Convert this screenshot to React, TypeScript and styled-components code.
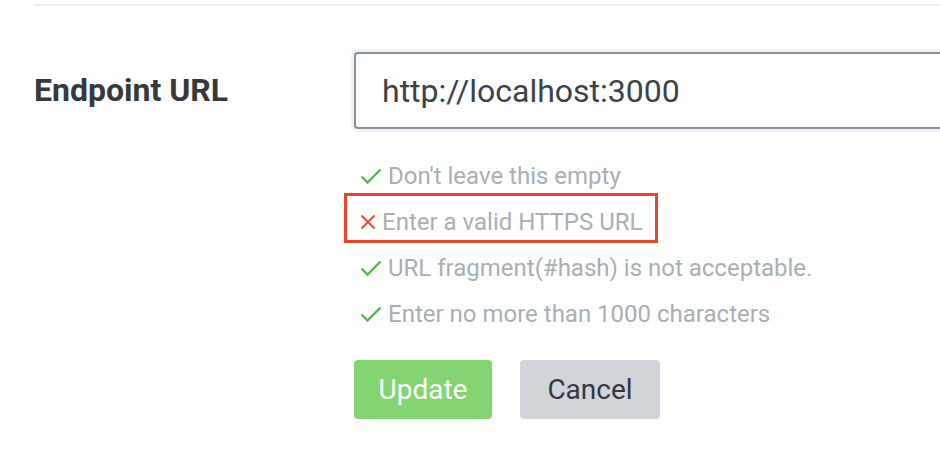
import React from "react";
import styled, { createGlobalStyle } from "styled-components";

const GlobalStyle = createGlobalStyle`
  body {
    margin: 0;
    background: #ffffff;
    font-family: Roboto, "Liberation Sans", Arial, sans-serif;
    overflow: hidden;
  }
`;

const Page = styled("div")`
  padding: 4px 0 0 34px;
  width: 100%;
  height: 462px;
  box-sizing: border-box;
  overflow: hidden;
`;

const Divider = styled("div")`
  border-top: 2px solid #eceef1;
  margin-right: -34px;
`;

const FormRow = styled("div")`
  display: grid;
  grid-template-columns: 320px 1fr;
  margin-top: 46px;
`;

const Label = styled("div")`
  font-size: 32px;
  font-weight: 700;
  color: #35393e;
  line-height: 77px;
`;

const Field = styled("div")`
  display: flex;
  flex-direction: column;
  align-items: flex-start;
  min-width: 0;
`;

const Input = styled("input")`
  width: calc(100% + 20px);
  height: 77px;
  box-sizing: border-box;
  border: 2px solid #8b9199;
  border-radius: 4px;
  box-shadow: 0 0 0 3px #eff1f4;
  padding: 0 26px;
  font-family: Roboto, "Liberation Sans", Arial, sans-serif;
  font-size: 32px;
  color: #3d4248;
  outline: none;
`;

const RuleList = styled("ul")`
  list-style: none;
  margin: 24px 0 0;
  padding: 0;
  display: flex;
  flex-direction: column;
  align-items: flex-start;
`;

const Rule = styled("li")`
  position: relative;
  display: inline-flex;
  align-items: center;
  gap: 6px;
  height: 46px;
  padding-left: 6px;
  font-size: 24px;
  color: #a9afb6;
  white-space: nowrap;
`;

const Highlight = styled("span")`
  position: absolute;
  top: -6px;
  bottom: 2px;
  left: -10px;
  right: -16px;
  border: 3px solid #e8452c;
  pointer-events: none;
`;

const Actions = styled("div")`
  display: flex;
  gap: 28px;
  margin-top: 23px;
`;

const Button = styled("button")<{ $primary?: boolean }>`
  height: 59px;
  width: ${(p) => (p.$primary ? "138px" : "140px")};
  border: none;
  border-radius: 4px;
  font-family: Roboto, "Liberation Sans", Arial, sans-serif;
  font-size: 28px;
  background: ${(p) => (p.$primary ? "#84d474" : "#d1d4d9")};
  color: ${(p) => (p.$primary ? "#ffffff" : "#35393e")};
  cursor: pointer;
`;

const CheckIcon = () => (
  <svg width="22" height="18" viewBox="0 0 22 18">
    <polyline
      points="1.5,9.5 7.5,15.5 20.5,2.5"
      fill="none"
      stroke="#53b94a"
      strokeWidth="2.4"
    />
  </svg>
);

const CrossIcon = () => (
  <svg width="16" height="16" viewBox="0 0 16 16">
    <path d="M1.5 1.5 L14.5 14.5 M14.5 1.5 L1.5 14.5" stroke="#e5533d" strokeWidth="2.2" />
  </svg>
);

const rules = [
  { text: "Don't leave this empty", ok: true },
  { text: "Enter a valid HTTPS URL", ok: false },
  { text: "URL fragment(#hash) is not acceptable.", ok: true },
  { text: "Enter no more than 1000 characters", ok: true },
];

export default function App() {
  return (
    <>
      <GlobalStyle />
      <Page>
        <Divider />
        <FormRow>
          <Label>Endpoint URL</Label>
          <Field>
            <Input defaultValue="http://localhost:3000" />
            <RuleList>
              {rules.map((r) => (
                <Rule key={r.text}>
                  {r.ok ? <CheckIcon /> : <CrossIcon />}
                  {r.text}
                  {!r.ok && <Highlight />}
                </Rule>
              ))}
            </RuleList>
            <Actions>
              <Button $primary>Update</Button>
              <Button>Cancel</Button>
            </Actions>
          </Field>
        </FormRow>
      </Page>
    </>
  );
}
